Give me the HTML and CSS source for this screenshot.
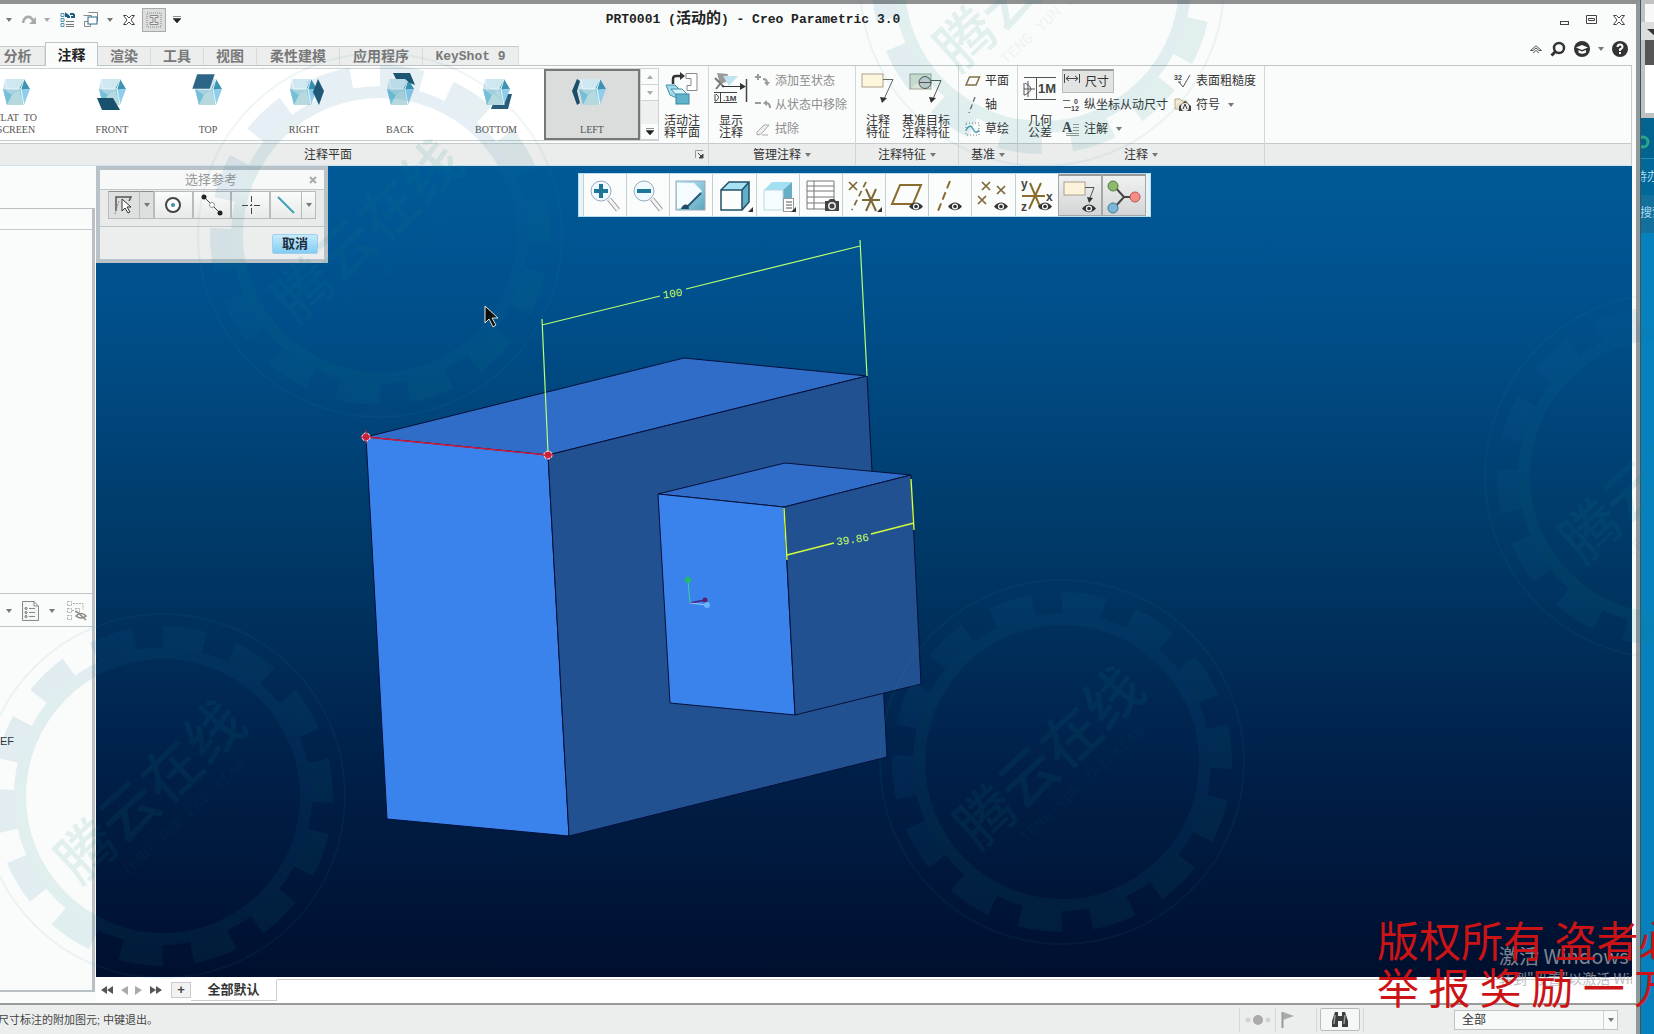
FILE: index.html
```html
<!DOCTYPE html>
<html lang="zh-CN">
<head>
<meta charset="utf-8">
<title>PRT0001 (活动的) - Creo Parametric 3.0</title>
<link rel="stylesheet" href="styles.css">
</head>
<body>
<svg class="defs" aria-hidden="true">
  <defs>
    <symbol id="cube" viewBox="-20 -20 40 40">
      <polygon points="-11,-12 8,-12 5,-2 -13,-2" fill="#cfe7f1"/>
      <polygon points="-13,-2 5,-2 8,14 -9,14" fill="#a5d3dd"/>
      <polygon points="-13,-2 -4,4 -9,14" fill="#74c0d8"/>
      <polygon points="-4,4 5,-2 8,14 -9,14" fill="#b5d9df"/>
      <polygon points="8,-12 14,-2 3,-1" fill="#3b94b2"/>
      <polygon points="3,-1 14,-2 8,14" fill="#8fcdec"/>
      <path d="M-11-12L-9-2H5L8-12M5-2L8 14" fill="none" stroke="#e9f6fb"/>
    </symbol>
    <symbol id="eye" viewBox="0 0 14 9">
      <path d="M0 4.500Q7-3.500 14 4.500Q7 12 0 4.500Z" fill="#333"/>
      <circle cx="7" cy="4.500" r="3.100" fill="#f4f4f4"/><circle cx="7" cy="4.500" r="1.800" fill="#333"/>
    </symbol>
    <linearGradient id="glass" x1="0" y1="0" x2="1" y2="1"><stop offset="0" stop-color="#c4edf9"/><stop offset="1" stop-color="#5aa5bd"/></linearGradient>
    <linearGradient id="mark" x1="0" y1="1" x2="1" y2="0"><stop offset="0" stop-color="#108a80"/><stop offset="1" stop-color="#1468a8"/></linearGradient>
    <g id="watermark">
      <circle r="182" fill="none" stroke="#2d8d9b" stroke-width="2" opacity=".7"/>
      <circle r="143" fill="none" stroke="url(#mark)" stroke-width="12"/>
      <circle r="159" fill="none" stroke="url(#mark)" stroke-width="22" stroke-dasharray="42 29.360" transform="rotate(-90)"/>
      <g transform="translate(-12 -4) rotate(-43)">
        <text class="mark-cn" x="0" y="20" text-anchor="middle">腾云在线</text>
        <text class="mark-en" x="6" y="46" text-anchor="middle">TENG YUN ZAI XIAN</text>
      </g>
    </g>
  </defs>
</svg>

<div class="page">
<div class="app">
  <header class="titlebar">
    <div class="quick">
      <span class="caret"></span>
      <button aria-label="重做"><svg width="15" height="12"><path d="M1 9Q2 2 8 3L12 7" fill="none" stroke="#aaa" stroke-width="2.500"/><path d="M14 3V10H7Z" fill="#aaa"/></svg></button>
      <span class="caret light"></span>
      <button aria-label="重新生成"><svg width="16" height="16"><path d="M1 1.500h3v3h-3zM1 6.500h3v3h-3zM1 11.500h3v3h-3z" fill="none" stroke="#4e93ac"/><path d="M6 5V2l3 2M14 2V5l-3 0M7 5h3M10 2h4" fill="none" stroke="#1f5f7c" stroke-width="2"/><path d="M6 9.500h8M6 12.500h8M6 14.500h8" stroke="#777"/></svg></button>
      <button aria-label="窗口"><svg width="17" height="16"><path d="M5.500 .5h9v9M.5 3.500h8v5M1.500 14.500v-5h6v5z" fill="none" stroke="#888"/><rect x="5" y="5" width="9" height="7" fill="#fff" stroke="#2b6c88"/></svg></button>
      <span class="caret"></span>
      <button aria-label="关闭"><svg width="12" height="12"><path d="M.5 1.500h3l2.500 2.500 2.500-2.500h3l-3.500 4.500 3.500 4.500h-3l-2.500-2.500-2.500 2.500h-3l3.500-4.500z" fill="#fff" stroke="#444"/></svg></button>
      <button class="pressed" aria-label="选择框"><svg width="16" height="16"><rect x="1" y="1" width="14" height="14" fill="none" stroke="#888" stroke-dasharray="1 1"/><path d="M4 3.500h8v2h-3v5h3v2h-8v-2h3v-5h-3z" fill="#eee" stroke="#888"/></svg></button>
      <button aria-label="自定义"><svg width="8" height="7"><path d="M0 .5h8M0 2.500h8L4 7z" fill="#222" stroke="#222" stroke-width=".5"/></svg></button>
    </div>
    <h1>PRT0001 (<span>活动的</span>) - Creo Parametric 3.0</h1>
    <div class="window-buttons">
      <button aria-label="最小化"><svg width="12" height="12"><rect x="1.500" y="7.500" width="8" height="3" fill="none" stroke="#444"/></svg></button>
      <button aria-label="还原"><svg width="12" height="12"><path d="M.5 1.500h10v8h-10zM2.500 4.500h6v2h-6z" fill="none" stroke="#444"/></svg></button>
      <button aria-label="关闭"><svg width="12" height="12"><path d="M.5 1.500h3l2.500 2.500 2.500-2.500h3l-3.500 4.500 3.500 4.500h-3l-2.500-2.500-2.500 2.500h-3l3.500-4.500z" fill="#fff" stroke="#444"/></svg></button>
    </div>
  </header>

  <nav class="tabs">
    <button class="tab">分析</button><button class="tab active">注释</button><button class="tab">渲染</button><button class="tab">工具</button><button class="tab">视图</button><button class="tab wide">柔性建模</button><button class="tab wide">应用程序</button><button class="tab latin">KeyShot 9</button>
    <div class="help">
      <button aria-label="折叠"><svg width="12" height="9"><path d="M.5 5.500L6 .8L11.500 5.500H9L6 3L3 5.500ZM3 8L6 5.500L9 8" fill="none" stroke="#555"/></svg></button>
      <button aria-label="搜索"><svg width="16" height="16"><circle cx="9" cy="7" r="5" fill="none" stroke="#333" stroke-width="2.500"/><path d="M5.500 10.500L1.500 14.500" stroke="#333" stroke-width="3"/></svg></button>
      <button aria-label="学习"><svg width="16" height="16"><circle cx="8" cy="8" r="8" fill="#333"/><path d="M2 6.500L8 4L14 6.500L8 9ZM4.500 9V11.500Q8 14 12 11.500V9L8 10.500Z" fill="#fff"/></svg></button>
      <span class="caret"></span>
      <button aria-label="帮助"><svg width="16" height="16"><circle cx="8" cy="8" r="8" fill="#333"/><path d="M5.500 6Q5.500 3.500 8 3.500T10.500 6Q10.500 7.300 8 8.500V10" fill="none" stroke="#fff" stroke-width="2"/><rect x="7" y="11" width="2" height="2" fill="#fff"/></svg></button>
    </div>
  </nav>

  <section class="ribbon">
    <div class="group g-planes">
      <div class="body">
        <div class="gallery">
          <button class="view"><svg width="40" height="42" viewBox="-20 -20 40 42"><use href="#cube" x="-20" y="-20" width="40" height="40"/></svg><span class="two">FLAT&nbsp; TO<br>SCREEN</span></button>
          <button class="view"><svg width="40" height="42" viewBox="-20 -20 40 42"><use href="#cube" x="-20" y="-20" width="40" height="40"/><polygon points="-15,7 1,7 8,19 -10,19" fill="#19506d"/></svg><span>FRONT</span></button>
          <button class="view"><svg width="40" height="42" viewBox="-20 -20 40 42"><use href="#cube" x="-20" y="-20" width="40" height="40"/><polygon points="-11,-17 7,-17 2,-2 -16,-2" fill="#2c6587" stroke="#fff" stroke-width=".5"/></svg><span>TOP</span></button>
          <button class="view"><svg width="40" height="42" viewBox="-20 -20 40 42"><use href="#cube" x="-21" y="-20" width="40" height="40"/><polygon points="14,-12 20,0 15,14 9,1" fill="#225674"/></svg><span>RIGHT</span></button>
          <button class="view"><svg width="40" height="42" viewBox="-20 -20 40 42"><use href="#cube" x="-20" y="-20" width="40" height="40"/><polygon points="-7,-18 10,-18 15,-6 10,-8 5,-12 -4,-12" fill="#1b526e"/></svg><span>BACK</span></button>
          <button class="view"><svg width="40" height="42" viewBox="-20 -20 40 42"><polygon points="-5,18 12,18 16,3 10,3 -2,10" fill="#275b78"/><use href="#cube" x="-20" y="-20" width="40" height="40"/></svg><span>BOTTOM</span></button>
          <button class="view selected"><svg width="40" height="42" viewBox="-20 -20 40 42"><use href="#cube" x="-20" y="-20" width="40" height="40"/><polygon points="-15,-12 -12,-10 -15,0 -12,12 -15,14 -20,0" fill="#1b4e69"/></svg><span>LEFT</span></button>
        </div>
        <div class="scroller">
          <button aria-label="上"><i class="up"></i></button><button aria-label="下"><i class="caret light"></i></button><span></span><button aria-label="更多"><svg width="8" height="7"><path d="M0 .5h8M0 2.500h8L4 7z" fill="#222" stroke="#222" stroke-width=".5"/></svg></button>
        </div>
        <button class="big"><svg width="34" height="34"><path d="M8 12V7Q8 4 11 4H16" fill="none" stroke="#333" stroke-width="2.500"/><path d="M15 0L20 4L15 8Z" fill="#333"/><path d="M21 1.500H32V18.500H22V13.500H26V6.500H21Z" fill="#fff" stroke="#888"/><path d="M1 13H10L14 17V27L5 23Z" fill="#9fdbe9" stroke="#4292aa"/><path d="M6 17H17L23 23H11Z" fill="#d6f1f7" stroke="#4292aa"/><rect x="11" y="22" width="13" height="10" fill="#5fb3ca" stroke="#3a86a0"/></svg><span>活动注<br>释平面</span></button>
      </div>
      <footer><span class="title-planes">注释平面</span><button class="launch" aria-label="更多选项"><svg width="9" height="9"><path d="M.5 8V.5H8" fill="none" stroke="#999"/><path d="M3 3L7 7M8 4V8H4Z" fill="#444" stroke="#444"/></svg></button></footer>
    </div>

    <div class="group g-manage">
      <div class="body">
        <button class="big"><svg width="34" height="34"><path d="M3 1L14 2L12 10L6 12Z" fill="#999"/><path d="M1 6L10 15M2 17L6 12" stroke="#777" stroke-width="2"/><path d="M9 4H24L15 14Z" fill="#bfe4ee"/><path d="M8 14.500H30" stroke="#333"/><path d="M26 11L32 14.500L26 18Z" fill="#333"/><path d="M32.500 7V30" stroke="#444" stroke-width="1.500"/><path d="M0 20.500H23M0 30.500H23M6.500 21V30M1 22v7h1q5-3.500 0-7" fill="none" stroke="#444"/><text x="9" y="29" class="icon-text small">.1M</text></svg><span>显示<br>注释</span></button>
        <div class="rows muted">
          <button><svg width="16" height="16"><path d="M3 1v6M0 4h6" stroke="#999" stroke-width="2"/><path d="M8 6Q12 6 12 10" fill="none" stroke="#999" stroke-width="2"/><path d="M9 9H15L12 13Z" fill="#999"/></svg>添加至状态</button>
          <button><svg width="16" height="16"><path d="M0 6h6" stroke="#999" stroke-width="2"/><path d="M15 11Q15 6 11 6" fill="none" stroke="#999" stroke-width="2"/><path d="M12 3V9L8 6Z" fill="#999"/></svg>从状态中移除</button>
          <button><svg width="16" height="16"><path d="M2 11L9 4H14L8 11Q6 14 2 14Z" fill="#eee" stroke="#aaa"/><path d="M7 14H13" stroke="#aaa"/></svg>拭除</button>
        </div>
      </div>
      <footer>管理注释<i class="caret"></i></footer>
    </div>

    <div class="group g-feature">
      <div class="body">
        <button class="big"><svg width="34" height="34"><rect x="1" y="2" width="21" height="13" fill="#fdf6dc" stroke="#aaa089"/><path d="M22 7.500H32L23 27" fill="none" stroke="#666"/><path d="M19 25L26 26L21 31Z" fill="#333"/></svg><span>注释<br>特征</span></button>
        <button class="big"><svg width="34" height="34"><rect x="1" y="2" width="21" height="15" fill="#d9e6d4" stroke="#9aa496"/><circle cx="16" cy="10.500" r="6" fill="#b9c9cb" stroke="#555"/><path d="M10 10.500H22M22 8.500H32L24 27" fill="none" stroke="#555"/><path d="M20 25L27 26L22 31Z" fill="#333"/></svg><span>基准目标<br>注释特征</span></button>
      </div>
      <footer>注释特征<i class="caret"></i></footer>
    </div>

    <div class="group g-datum">
      <div class="body"><div class="rows">
        <button><svg width="16" height="16"><path d="M4.500 4H14.500L11 12H1Z" fill="none" stroke="#80704a" stroke-width="1.500"/></svg>平面</button>
        <button><svg width="16" height="16"><path d="M10 0L4 16" stroke="#666" stroke-width="1.300" stroke-dasharray="5 3"/></svg>轴</button>
        <button><svg width="16" height="16"><rect x="1" y="2" width="13" height="12" fill="none" stroke="#777" stroke-dasharray="1 2"/><path d="M1 9Q5 2 8 8T14 9" fill="none" stroke="#489bb8" stroke-width="1.500"/></svg>草绘</button>
      </div></div>
      <footer>基准<i class="caret"></i></footer>
    </div>

    <div class="group g-annot">
      <div class="body">
        <button class="big"><svg width="34" height="34"><path d="M1 5.500H33M1 27.500H33M13.500 5V28M1 11v12h1q12-6 0-12M1 17h11M5 9v16" fill="none" stroke="#555"/><text x="15" y="21" class="icon-text mid">1M</text></svg><span>几何<br>公差</span></button>
        <div class="rows">
          <button class="pressed"><svg width="18" height="16"><path d="M1.500 0V9M16.500 0V9M3 4.500H15M6 2L3 4.500L6 7M12 2L15 4.500L12 7" fill="none" stroke="#444"/></svg>尺寸</button>
          <button><svg width="18" height="16"><path d="M1 3.500H8M2 10.500H9" stroke="#666"/><text x="12" y="7" class="icon-text tiny">0</text><text x="9" y="14" class="icon-text tiny">12</text></svg>纵坐标从动尺寸</button>
          <button><svg width="18" height="16"><text x="0" y="11" class="icon-text serif">A</text><path d="M11 3.500H17M11 6.500H17M11 9.500H17M4 12.500H17M4 14.500H17" stroke="#999"/></svg>注解<i class="caret"></i></button>
        </div>
        <div class="rows">
          <button><svg width="18" height="16"><text x="0" y="7" class="icon-text tiny">32</text><path d="M5 9L9 14L16 2M4 9H7" fill="none" stroke="#555"/></svg>表面粗糙度</button>
          <button><svg width="18" height="16"><path d="M1 12V2H6L8 4H13V12Z" fill="#f4ead0" stroke="#bbae8c"/><path d="M11 4L17 9V14H5V9Z" fill="#444"/><circle cx="11" cy="10" r="4" fill="#eee"/><path d="M9 12L11 7L13 12" fill="none" stroke="#333"/></svg>符号<i class="caret"></i></button>
        </div>
      </div>
      <footer>注释<i class="caret"></i></footer>
    </div>
    <div class="group g-rest"><div class="body"></div><footer></footer></div>
  </section>

  <main class="work">
    <aside class="tree">
      <div class="tree-head"></div>
      <div class="tree-box">
        <div class="tree-title"></div>
        <div class="tree-top"></div>
        <div class="tree-tools">
          <i class="caret"></i>
          <button aria-label="设置"><svg width="17" height="20"><path d="M.5 .5H12L16.500 5V19.500H.5Z" fill="#f4f6f6" stroke="#888"/><path d="M12 0V5H16" fill="none" stroke="#888"/><path d="M7 7.500H13M7 11.500H13M7 15.500H13" stroke="#888"/><g fill="none" stroke="#666"><circle cx="4" cy="7.500" r="1"/><circle cx="4" cy="11.500" r="1"/><circle cx="4" cy="15.500" r="1"/></g></svg></button>
          <i class="caret"></i>
          <button aria-label="过滤"><svg width="22" height="20"><path d="M2.500 .5h4v4h-4zM2.500 7.500h4v4h-4zM2.500 14.500h4v4h-4zM10.500 7.500h4v4h-4zM7 9.500h3M8 2.500h10v6" fill="none" stroke="#aaa" stroke-dasharray="2 1"/><path d="M11 15Q16 10 21 15Q16 19 11 15ZM11 10L21 19" fill="none" stroke="#888" stroke-width="1.500"/></svg></button>
        </div>
        <div class="tree-list"><p>EF</p></div>
      </div>
    </aside>

    <div class="stage">
      <div class="viewport">
        <svg class="model" aria-label="模型">
          <g transform="translate(-96 -166)" stroke-linejoin="round">
            <g stroke="#06103a">
              <polygon points="366,437 684,358 867,376 548,455" fill="#2f6dc9"/>
              <polygon points="366,437 548,455 569,836 387,819" fill="#3a82ec"/>
              <polygon points="548,455 867,376 887,757 569,836" fill="#225192"/>
              <polygon points="658,494 785,463 911,475 784,507" fill="#2f6dc9"/>
              <polygon points="658,494 784,507 795,715 670,703" fill="#3a82ec"/>
              <polygon points="784,507 911,475 921,684 795,715" fill="#225192"/>
            </g>
            <path d="M366 437L548 455" stroke="#d01c3c" stroke-width="1.300"/>
            <g fill="#d0263c" stroke="#fff" stroke-dasharray="3 1"><circle cx="366" cy="437" r="4"/><circle cx="548" cy="455" r="4"/></g>
            <path d="M360 437h12M366 430v14M542 455h12" stroke="#c0203a"/>
            <path d="M542 319L548 452M542 325L660 296M686 289L860 246M860 240L867 376" fill="none" stroke="#b6ff72" stroke-width="1.200"/>
            <path d="M784 508L787 560M787 555L834 543M871 534L914 523M911 479L914 530" fill="none" stroke="#d2ff3c" stroke-width="1.400"/>
            <text class="dim" transform="translate(673 297) rotate(-8)" text-anchor="middle">100</text>
            <text class="dim" transform="translate(853 543) rotate(-8)" text-anchor="middle">39.86</text>
            <path d="M690 603L688 581" stroke="#38d49a"/><circle cx="688" cy="580" r="3" fill="#1fbf5f"/>
            <path d="M690 603L705 600" stroke="#4a1e78" stroke-width="1.500"/><circle cx="705" cy="600" r="2.500" fill="#5a1f6c"/>
            <path d="M690 603L707 605" stroke="#9fc8ff"/><circle cx="707" cy="605" r="3" fill="#68b4ff"/>
            <path d="M485 306V323L489 319L493 327L496 325L492 318H498Z" fill="#0a0a0a" stroke="#f3e9d8"/>
          </g>
        </svg>

        <div class="view-tools">
          <button aria-label="放大"><svg width="36" height="36"><path d="M22 22L31 33" stroke="#999" stroke-width="5"/><path d="M22 22L31 33" stroke="#f4f4f4" stroke-width="3"/><circle cx="14" cy="14" r="10" fill="#eefaff" stroke="#9ab"/><path d="M14 7V21M7 14H21" stroke="#1d7696" stroke-width="4"/></svg></button>
          <button aria-label="缩小"><svg width="36" height="36"><path d="M22 22L31 33" stroke="#999" stroke-width="5"/><path d="M22 22L31 33" stroke="#f4f4f4" stroke-width="3"/><circle cx="14" cy="14" r="10" fill="#eefaff" stroke="#9ab"/><path d="M7 14H21" stroke="#1d7696" stroke-width="4"/></svg></button>
          <button aria-label="重画"><svg width="36" height="36"><rect x="3" y="4" width="29" height="29" fill="url(#glass)" stroke="#9ab"/><path d="M4 6H21L29 14L14 30L4 32Z" fill="#f5fcff"/><path d="M28 16L14 30" stroke="#285b79" stroke-width="2"/><path d="M8 32Q10 26 15 28L16 32Z" fill="#1d4a66"/></svg></button>
          <button class="more" aria-label="显示样式"><svg width="36" height="36"><path d="M4 13L12 5H32L25 13Z" fill="#a8e3f4"/><path d="M25 13L32 5V25L25 33Z" fill="#64afc6"/><path d="M4 13H25V33H4ZM4 13L12 5H32V25L25 33M25 13L32 5" fill="none" stroke="#22506a" stroke-width="1.500"/></svg></button>
          <button class="more" aria-label="已保存方向"><svg width="36" height="36"><path d="M4 13L12 5H32L23 13Z" fill="#a2e0f3"/><path d="M23 13L32 5V26L23 33Z" fill="#64afc6"/><path d="M4 13H23V33H4Z" fill="#f4fcff" stroke="#b9d8e2"/><rect x="23.500" y="21.500" width="10" height="13" fill="#fff" stroke="#999"/><path d="M26 25H32M26 28H32M26 31H32" stroke="#555"/></svg></button>
          <button aria-label="视图管理器"><svg width="36" height="36"><path d="M4 4H31V32H4ZM4 9H31M4 14H31M4 20H31M4 26H31M11 4V32" fill="#fff" stroke="#777"/><path d="M22 24H25L27 22H31L33 24H36V34H22Z" fill="#444"/><circle cx="29" cy="29" r="4" fill="#eee"/><circle cx="29" cy="29" r="2.500" fill="#444"/></svg></button>
          <button class="more" aria-label="基准显示"><svg width="36" height="36"><g fill="none" stroke="#7d6836"><path d="M3 5L11 13M11 5L3 13" stroke-width="1.700"/><path d="M20 5L6 33" stroke-width="1.700" stroke-dasharray="6 4"/><path d="M16 23H34M20 12L30 34M30 12L20 34" stroke-width="2"/></g></svg></button>
          <button aria-label="平面显示"><svg width="36" height="36"><path d="M11 8H32L24 27H3Z" fill="none" stroke="#8a6d2e" stroke-width="2"/><use href="#eye" x="20" y="25" width="14" height="9"/></svg></button>
          <button aria-label="轴显示"><svg width="36" height="36"><path d="M18 4L6 34" stroke="#8a6d2e" stroke-width="2" stroke-dasharray="8 4"/><use href="#eye" x="16" y="25" width="14" height="9"/></svg></button>
          <button aria-label="点显示"><svg width="36" height="36"><path d="M7 5L15 13M15 5L7 13M22 9L30 17M30 9L22 17M3 19L11 27M11 19L3 27" stroke="#7d6836" stroke-width="1.700"/><use href="#eye" x="19" y="25" width="14" height="9"/></svg></button>
          <button aria-label="坐标系显示"><svg width="36" height="36"><path d="M3 19H26M11 6L22 32M22 6L10 32" stroke="#8a6d2e" stroke-width="2"/><text x="2" y="11" class="icon-text axis">y</text><text x="27" y="24" class="icon-text axis">x</text><text x="2" y="34" class="icon-text axis">z</text><use href="#eye" x="19" y="25" width="14" height="9"/></svg></button>
          <button class="pressed" aria-label="注释显示"><svg width="36" height="36"><rect x="2" y="4" width="21" height="13" fill="#fdf3da" stroke="#aaa089"/><path d="M23 9.500H32L28 20" fill="none" stroke="#555"/><path d="M25 19L31 20L27 25Z" fill="#333"/><use href="#eye" x="20" y="26" width="14" height="9"/></svg></button>
          <button class="pressed" aria-label="旋转中心"><svg width="36" height="36"><path d="M8 8L18 19L8 30M18 19H29" fill="none" stroke="#444" stroke-width="2"/><circle cx="7" cy="8" r="5" fill="#8cba6c" stroke="#557a44"/><circle cx="7" cy="30" r="5" fill="#7ab6d8" stroke="#3f7c9c"/><circle cx="29" cy="19" r="5" fill="#f38e88" stroke="#b95550"/></svg></button>
        </div>

        <section class="dialog">
          <header><h2>选择参考</h2><button aria-label="关闭"><svg width="8" height="8"><path d="M1 1L7 7M7 1L1 7" stroke="#aaa" stroke-width="2"/></svg></button></header>
          <div class="ref-tools">
            <button class="ref slim pressed" aria-label="选择图元"><svg width="24" height="24"><path d="M4 18V4H19L17 8" fill="none" stroke="#555" stroke-width="1.500"/><path d="M7 8L3 21" stroke="#888" stroke-dasharray="2 1"/><path d="M10 6V18L13 15L16 20L18 19L15 14H19Z" fill="#fff" stroke="#333"/></svg></button>
            <button class="ref drop pressed" aria-label="更多选择"><i class="caret"></i></button>
            <button class="ref" aria-label="圆心"><svg width="24" height="24"><circle cx="12" cy="12" r="7" fill="#fff" stroke="#444" stroke-width="2"/><circle cx="12" cy="12" r="2" fill="#3c8fae"/></svg></button>
            <button class="ref" aria-label="中点"><svg width="24" height="24"><path d="M4 4L20 20" stroke="#444"/><circle cx="4" cy="4" r="2.500" fill="#222"/><circle cx="20" cy="20" r="2.500" fill="#222"/><circle cx="12" cy="12" r="2.500" fill="#fff" stroke="#999"/></svg></button>
            <button class="ref" aria-label="交点"><svg width="24" height="24"><path d="M3 12.500H21M12.500 3V21" stroke="#444" stroke-dasharray="6 2 2 2"/></svg></button>
            <button class="ref slim" aria-label="直线"><svg width="24" height="24"><path d="M4 4L20 20" stroke="#3fa0b8" stroke-width="2"/></svg></button>
            <button class="ref drop" aria-label="更多直线"><i class="caret"></i></button>
          </div>
          <footer><button class="cancel">取消</button></footer>
        </section>
      </div>

      <div class="sheets">
        <button aria-label="最前"><svg width="12" height="8"><path d="M6 0V8L0 4ZM12 0V8L6 4Z" fill="#555"/></svg></button>
        <button aria-label="上一个"><svg width="8" height="10"><path d="M8 1V10L1 5Z" fill="#aaa"/></svg></button>
        <button aria-label="下一个"><svg width="8" height="10"><path d="M0 1V10L7 5Z" fill="#aaa"/></svg></button>
        <button aria-label="最后"><svg width="12" height="8"><path d="M0 0V8L6 4ZM6 0V8L12 4Z" fill="#555"/></svg></button>
        <button class="add">+</button>
        <button class="sheet">全部默认</button>
        <div class="sheet-rest"></div>
      </div>
    </div>
  </main>

  <footer class="status">
    <p>尺寸标注的附加图元; 中键退出。</p>
    <div class="lights"><svg width="26" height="12"><circle cx="13" cy="6" r="5" fill="#aaa"/><circle cx="3" cy="6" r="2.500" fill="#d2d4d4"/><circle cx="23" cy="6" r="2.500" fill="#d2d4d4"/></svg></div>
    <div class="flag"><svg width="13" height="18"><path d="M1.500 1V17" stroke="#999" stroke-width="2"/><path d="M2 1L13 5L2 9Z" fill="#aaa"/></svg></div>
    <div class="find"><button aria-label="查找"><svg width="18" height="16"><path d="M4 0H7V4H11V0H14L17 9V15H11V9H7V15H1V9Z" fill="#3c3f3f"/><path d="M4 3L3 12M14 3L13 12" stroke="#999" stroke-width="1.500"/></svg></button></div>
    <label class="filter"><span class="sr">过滤器</span><select><option>全部</option></select><i class="caret"></i></label>
  </footer>
</div>

<aside class="desktop">
  <div class="d-white"></div><div class="d-arrow"><i></i></div><div class="d-dark"></div><div class="d-page"></div>
  <div class="d-icon"><svg width="14" height="30"><circle cx="2" cy="13" r="5" fill="none" stroke="#2aa58c" stroke-width="3"/></svg></div>
  <div class="d-item">待办</div><div class="d-item alt">搜索</div><div class="d-fill"></div>
</aside>

<div class="activate"><p>激活 Windows</p><small>转到"设置"以激活 Windows。</small></div>
<div class="copyright">版权所有 盗者必究<br>举 报 奖 励 一 万</div>
<svg class="watermarks" aria-hidden="true">
  <use href="#watermark" x="1042" y="-16"/><use href="#watermark" x="380" y="235"/><use href="#watermark" x="1667" y="476"/><use href="#watermark" x="163" y="796"/><use href="#watermark" x="1062" y="762"/>
</svg>
</div>
</body>
</html>
```
FILE: styles.css
```css
* { box-sizing: border-box; }
body, h1, h2, p { margin: 0; }
body {
  font-family: "Liberation Sans", "Noto Sans CJK SC", sans-serif;
  font-size: 12px;
  line-height: 16px;
  color: #333;
}
button {
  display: flex;
  align-items: center;
  justify-content: center;
  margin: 0;
  padding: 0;
  border: 0;
  background: none;
  font: inherit;
  color: inherit;
}
svg { display: block; flex: none; }
.defs { position: absolute; width: 0; height: 0; }
.page { position: relative; display: flex; height: 100vh; overflow: hidden; }
.app {
  display: flex;
  flex: 1;
  flex-direction: column;
  min-width: 0;
  padding-right: 4px;
  border-top: 4px solid #8f9091;
  border-right: 4px solid #8d999b;
  background: #fafcfb;
}
.caret {
  display: inline-block;
  flex: none;
  border: 3px solid transparent;
  border-top: 4px solid #777;
  border-bottom: 0;
}
.caret.light { border-top-color: #aaa; }
.icon-text { font: bold 16px "Liberation Sans", sans-serif; fill: #444; }
.icon-text.mid { font-size: 13px; }
.icon-text.small { font-size: 8px; }
.icon-text.tiny { font-size: 7px; }
.icon-text.serif { font: bold 14px "Liberation Serif", serif; }
.icon-text.axis { font-size: 12px; }

/* title bar */
.titlebar { position: relative; display: flex; align-items: center; justify-content: space-between; height: 38px; padding: 0 7px 7px 6px; }
.quick { display: flex; align-items: center; gap: 7px; }
.quick .pressed { width: 24px; height: 24px; border: 1px solid #aaa; background: #dcdddd; }
.quick .caret + button { margin-left: 3px; }
h1 {
  position: absolute;
  left: 0;
  right: 0;
  top: 8px;
  margin-left: -126px;
  text-align: center;
  font: bold 13px/16px "Liberation Mono", "Noto Sans CJK SC", monospace;
  color: #222;
  pointer-events: none;
}
h1 span { font-size: 15px; }
.window-buttons { display: flex; gap: 15px; }

/* tabs */
.tabs { display: flex; align-items: flex-end; height: 24px; border-bottom: 1px solid #bfc4c6; }
.tab {
  width: 53px;
  height: 19px;
  border-top: 1px solid #c9cccd;
  border-right: 1px solid #d8dadb;
  background: #eceeee;
  font-size: 14px;
  font-weight: 700;
  color: #787878;
}
.tab:first-child { width: 45px; padding-right: 9px; }
.tab.active { height: 24px; margin-bottom: -1px; border: 1px solid #bfc4c6; border-bottom: 0; background: #fafcfb; color: #222; }
.tab.wide { width: 83px; }
.tab.latin { width: 96px; font: bold 13px "Liberation Mono", monospace; }
.help { display: flex; align-items: center; gap: 8px; margin-left: auto; padding: 0 4px 8px 0; }

/* ribbon */
.ribbon { display: flex; height: 100px; border-right: 1px solid #c9cccd; border-bottom: 1px solid #cfe3ee; }
.group { display: flex; flex-direction: column; border-right: 1px solid #d3d6d6; }
.group .body { display: flex; flex: 1; padding: 2px 0 0; }
.group footer {
  display: flex;
  align-items: center;
  justify-content: center;
  gap: 4px;
  height: 22px;
  border-top: 1px solid #c6caca;
  background: #ebecec;
}
.g-planes { width: 709px; }
.g-manage { width: 147px; }
.g-feature { width: 103px; }
.g-datum { width: 59px; }
.g-annot { width: 247px; }
.g-rest { flex: 1; border-right: 0; }
.group.g-rest .body { padding: 0; }
.gallery { display: flex; justify-content: flex-end; width: 640px; border-top: 1px solid #d0d3d4; border-bottom: 1px solid #c9cccd; overflow: hidden; margin-bottom: 2px; background: #fff; }
.view { flex: none; flex-direction: column; justify-content: space-between; width: 96px; padding: 2px 0 4px; font: 10px/12px "Liberation Serif", serif; color: #555; }
.view .two { margin-top: -12px; }
.view.selected { border: 2px solid #777; background: #dbdcdc; padding: 0 0 2px; }
.scroller { display: flex; flex-direction: column; width: 19px; margin-bottom: 2px; border: 1px solid #d0d3d4; background: #eef0f0; }
.scroller button { height: 16px; border-bottom: 1px solid #d0d3d4; background: #fafcfb; }
.scroller span { flex: 1; }
.up { border: 3px solid transparent; border-bottom: 4px solid #aaa; border-top: 0; }
.big { flex-direction: column; justify-content: space-between; padding: 4px 0 4px 5px; line-height: 12px; }
.rows { display: flex; flex-direction: column; padding: 1px 0 0 5px; }
.rows button { justify-content: flex-start; gap: 4px; height: 24px; white-space: nowrap; }
.rows .caret { margin-left: 4px; }
.muted { color: #8c8c8c; }
.g-manage .rows { padding-left: 7px; }
.g-feature .big + .big { padding-left: 7px; }
.g-datum .rows { padding-left: 6px; }
.g-annot .rows { padding-left: 5px; }
.g-annot .rows + .rows { padding-left: 6px; }
.rows .pressed { width: 52px; border: 1px solid #bbb; border-top: 2px solid #999; background: #e2e3e3; }
.g-planes footer { justify-content: flex-end; }
.title-planes { margin-right: auto; padding-left: 304px; }
.launch { margin-right: 4px; }

/* model tree */
.work { display: flex; flex: 1; min-height: 0; }
.tree { display: flex; flex-direction: column; width: 96px; padding: 0 1px 11px 0; }
.tree-head { height: 42px; }
.tree-box { display: flex; flex: 1; flex-direction: column; border: solid #b9c1c4; border-width: 1px 3px 2px 0; }
.tree-title { height: 21px; border-bottom: 1px solid #c6cbcc; }
.tree-top, .tree-list { flex: 1; }
.tree-tools { display: flex; align-items: center; gap: 10px; height: 34px; padding: 2px 0 0 6px; border: solid #bfc4c6; border-width: 1px 0; }
.tree-list p { margin-top: 106px; font-size: 11px; }

/* drawing area */
.stage { display: flex; flex: 1; flex-direction: column; min-width: 0; }
.viewport { position: relative; flex: 1; min-height: 0; background: linear-gradient(#005a98 0%, #00508c 17%, #003866 48%, #001f48 75%, #000f2e 100%); overflow: hidden; }
.model { width: 100%; height: 100%; }
.dim { font: 11px "Liberation Mono", monospace; fill: #c8ff60; }
.view-tools { position: absolute; left: 482px; top: 7px; display: flex; width: 573px; height: 44px; padding: 0 4px; border: 1px solid #b8dcec; background: #e6f3f8; }
.view-tools button { position: relative; flex: 1; border-left: 1px solid #c2cfd4; background: #fbfdfd; }
.view-tools .pressed { border: 1px solid #a4a8a9; border-top: 2px solid #999; background: linear-gradient(#f0f1f1, #d3d5d6); }
.more::after { content: ""; position: absolute; right: 3px; bottom: 4px; border-left: 5px solid transparent; border-bottom: 5px solid #333; }

.dialog { position: absolute; left: 0; top: 0; width: 232px; height: 97px; border: 4px solid #b9c2c6; background: #eceeee; }
.dialog header { display: flex; align-items: center; height: 20px; padding-right: 7px; background: #f7f9f9; border-bottom: 1px solid #c2c6c8; }
.dialog h2 { flex: 1; text-align: center; padding-left: 13px; font-size: 13px; font-weight: 400; line-height: 16px; color: #999; }
.ref-tools { display: flex; height: 37px; padding: 1px 8px 7px; border-bottom: 1px solid #c2c6c8; background: #e9ebeb; }
.ref { flex: 1; border: 1px solid #bbb; background: linear-gradient(#fafbfb, #e8eaea); }
.ref.slim { flex: none; width: 32px; }
.ref.drop { flex: none; width: 14px; border-left: 0; }
.ref.pressed { border-color: #8e8e8e #bbb #bbb; background: #dedfdf; }
.dialog footer { display: flex; justify-content: flex-end; padding: 7px 6px 0; }
.cancel { width: 46px; height: 20px; border: 1px solid #9fd2ec; border-radius: 2px; background: linear-gradient(#c6ebfc, #84cbf2); font-size: 13px; font-weight: 700; color: #1c2c3c; }

/* sheet bar */
.sheets { display: flex; align-items: center; gap: 7px; height: 26px; padding: 2px 0 2px 5px; background: #fff; }
.sheets .add { width: 20px; height: 16px; margin-left: 2px; border: 1px solid #ccc; background: #f1f2f2; font-weight: 700; font-size: 13px; color: #444; }
.sheet { width: 86px; height: 21px; margin: 0 -7px; border: solid #ccc; border-width: 0 1px 1px 0; font-size: 13px; font-weight: 700; color: #333; }
.sheet-rest { align-self: stretch; flex: 1; border-top: 1px solid #ccc; }

/* status bar */
.status { display: flex; align-items: center; height: 31px; margin-right: -4px; padding-right: 18px; border-top: 2px solid #999; background: #eceeee; }
.status p { flex: 1; margin-left: -2px; font-size: 11px; color: #444; }
.status div { display: flex; align-items: center; height: 24px; padding: 0 5px; border-left: 1px solid #d5d8d8; }
.lights { width: 36px; }
.status .flag { width: 41px; }
.status .find { width: 48px; padding: 0 3px; border-right: 1px solid #d5d8d8; }
.find button { width: 40px; height: 23px; border: 1px solid #bbb; border-radius: 2px; background: #f5f7f7; }
.filter { position: relative; display: flex; align-items: center; margin-left: 90px; }
.filter select { width: 164px; height: 20px; padding: 0 7px; border: 1px solid #c2c4c4; border-radius: 0; appearance: none; background: #f8fafa; font: inherit; color: #333; }
.filter .caret { position: absolute; right: 4px; }
.filter::after { content: ""; position: absolute; right: 14px; top: 1px; bottom: 1px; border-left: 1px solid #d0d2d2; }
.sr { position: absolute; width: 1px; height: 1px; overflow: hidden; clip-path: inset(50%); }

/* desktop strip behind the window */
.desktop { display: flex; flex-direction: column; width: 14px; padding-top: 4px; border-left: 1px solid #3e525c; background: #c0c2c2; overflow: hidden; }
.d-white { height: 18px; margin-left: 4px; background: #f8f8f8; }
.d-arrow { height: 18px; padding: 7px 0 0 6px; background: #dcdddd; }
.d-arrow i { display: block; width: 0; border: 8px solid transparent; border-top: 7px solid #333; border-bottom: 0; }
.d-dark { height: 25px; margin-left: 4px; background: #555; }
.d-page { height: 48px; margin-left: 4px; background: #fff; }
.d-icon { height: 41px; margin-top: 5px; padding-top: 11px; border-bottom: 1px solid #268cb0; background: #02638f; }
.d-item { height: 36px; padding-top: 10px; background: #02689a; color: #a8d8ec; text-indent: -6px; white-space: nowrap; }
.d-item.alt { height: 38px; background: #136f9c; text-indent: -1px; }
.d-fill { flex: 1; background: #0681be; }

/* overlays */
.activate { position: absolute; right: 22px; bottom: 47px; width: 133px; overflow: hidden; white-space: nowrap; color: #a9adb4; opacity: .75; pointer-events: none; }
.activate p { font: 20px/26px "Noto Sans CJK SC", sans-serif; }
.activate small { display: block; font: 14px/18px "Noto Sans CJK SC", sans-serif; }
.copyright { position: absolute; left: 1377px; right: 0; bottom: 25px; overflow: hidden; white-space: nowrap; font: 42px/47px "Noto Sans CJK SC", sans-serif; color: #cc1417; pointer-events: none; }
.watermarks { position: absolute; inset: 0; width: 100%; height: 100%; opacity: .1; pointer-events: none; }
.mark-cn { font: 500 58px "Noto Sans CJK SC", sans-serif; fill: #108a88; }
.mark-en { font: 16px "Liberation Mono", monospace; fill: #108a88; opacity: .6; }
```
